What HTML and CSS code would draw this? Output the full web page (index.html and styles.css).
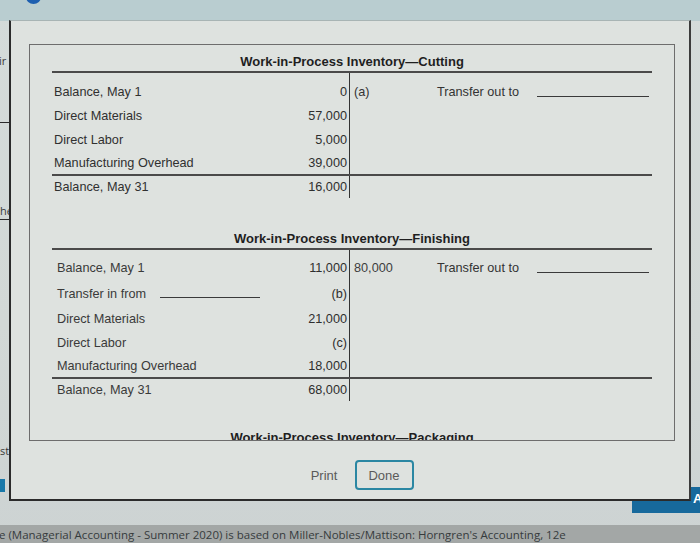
FILE: index.html
```html
<!DOCTYPE html>
<html>
<head>
<meta charset="utf-8">
<link rel="stylesheet" href="styles.css">
</head>
<body>
<div class="page">
  <div class="under">
    <div class="topstrip"><span class="dot"></span></div>
    <div class="leftcol">
      <div class="frag frag-ir">ir</div>
      <div class="frag-rule rule-1"></div>
      <div class="frag frag-he">he</div>
      <div class="frag-rule rule-2"></div>
      <div class="frag frag-st">st</div>
      <div class="frag-blue"></div>
    </div>
    <div class="bluebtn">A</div>
    <div class="footer">e (Managerial Accounting - Summer 2020) is based on Miller-Nobles/Mattison: Horngren's Accounting, 12e</div>
  </div>

  <div class="modal">
    <div class="panel">
      <div class="taccount">
        <div class="ttitle">Work-in-Process Inventory—Cutting</div>
        <div class="trow first">
          <div class="lcell"><span>Balance, May 1</span><span class="amt">0</span></div>
          <div class="rcell"><span class="ramt">(a)</span><span class="xfer">Transfer out to</span><span class="blank wide"></span></div>
        </div>
        <div class="trow">
          <div class="lcell"><span>Direct Materials</span><span class="amt">57,000</span></div>
          <div class="rcell"></div>
        </div>
        <div class="trow">
          <div class="lcell"><span>Direct Labor</span><span class="amt">5,000</span></div>
          <div class="rcell"></div>
        </div>
        <div class="trow ruled">
          <div class="lcell"><span>Manufacturing Overhead</span><span class="amt">39,000</span></div>
          <div class="rcell"></div>
        </div>
        <div class="trow last">
          <div class="lcell"><span>Balance, May 31</span><span class="amt">16,000</span></div>
          <div class="rcell"></div>
        </div>
      </div>

      <div class="taccount second">
        <div class="ttitle">Work-in-Process Inventory—Finishing</div>
        <div class="trow first">
          <div class="lcell"><span class="lbl-b">Balance, May 1</span><span class="amt">11,000</span></div>
          <div class="rcell"><span class="ramt">80,000</span><span class="xfer">Transfer out to</span><span class="blank wide"></span></div>
        </div>
        <div class="trow tall">
          <div class="lcell"><span class="lbl-b">Transfer in from</span><span class="blank short"></span><span class="amt">(b)</span></div>
          <div class="rcell"></div>
        </div>
        <div class="trow">
          <div class="lcell"><span class="lbl-b">Direct Materials</span><span class="amt">21,000</span></div>
          <div class="rcell"></div>
        </div>
        <div class="trow">
          <div class="lcell"><span class="lbl-b">Direct Labor</span><span class="amt">(c)</span></div>
          <div class="rcell"></div>
        </div>
        <div class="trow ruled">
          <div class="lcell"><span class="lbl-b">Manufacturing Overhead</span><span class="amt">18,000</span></div>
          <div class="rcell"></div>
        </div>
        <div class="trow last">
          <div class="lcell"><span class="lbl-b">Balance, May 31</span><span class="amt">68,000</span></div>
          <div class="rcell"></div>
        </div>
      </div>

      <div class="taccount third">
        <div class="ttitle">Work-in-Process Inventory—Packaging</div>
      </div>
    </div>
    <div class="actions">
      <button class="btn print">Print</button>
      <button class="btn done">Done</button>
    </div>
  </div>
</div>
</body>
</html>
```

FILE: styles.css
```css
* { box-sizing: border-box; }
html, body { margin: 0; padding: 0; }
body {
  width: 700px;
  height: 543px;
  overflow: hidden;
  background: #cfd6d5;
  font-family: "Liberation Sans", Arial, Helvetica, sans-serif;
  color: #2e2e2e;
}
.page {
  position: relative;
  width: 700px;
  height: 543px;
  overflow: hidden;
}

/* underlying page */
.under {
  display: flex;
  flex-direction: column;
  height: 543px;
  background: linear-gradient(180deg, #d4dbda 0%, #d2d8d6 60%, #cdd3d3 100%);
}
.topstrip {
  height: 21px;
  background: #b9cdd0;
  position: relative;
  flex: none;
}
.dot {
  position: absolute;
  left: 26px;
  top: -10px;
  width: 15px;
  height: 14px;
  border-radius: 50%;
  background: #1d5fb0;
}
.leftcol {
  width: 9px;
  flex: 1;
  display: flex;
  flex-direction: column;
  overflow: hidden;
  font-family: "Open Sans", "Liberation Sans", sans-serif;
  font-size: 11px;
  color: #3a3a3a;
}
.frag { line-height: 12px; white-space: nowrap; }
.frag-ir { margin-top: 34px; margin-left: -1px; }
.frag-rule { height: 1px; background: #2a2a2a; width: 9px; }
.rule-1 { margin-top: 55px; }
.frag-he { margin-top: 82px; margin-left: 0; }
.rule-2 { margin-top: 2px; }
.frag-st { margin-top: 225px; margin-left: 0; }
.frag-blue { margin-top: 22px; width: 5px; height: 13px; background: #1878a9; }

.bluebtn {
  position: absolute;
  left: 632px;
  top: 487px;
  width: 80px;
  height: 26px;
  background: #17699c;
  color: #fff;
  font-size: 13px;
  font-weight: bold;
  padding: 4px 0 0 61px;
}
.footer {
  flex: none;
  height: 18px;
  background: #a3a7a6;
  font-family: "Open Sans", "Liberation Sans", sans-serif;
  font-size: 11.5px;
  line-height: 16px;
  color: #363b3d;
  white-space: nowrap;
  padding-top: 2px;
  margin-left: -1px;
}

/* modal dialog overlaying the page */
.modal {
  position: absolute;
  left: 9px;
  top: 20px;
  width: 682px;
  height: 481px;
  background: #dee2df;
  border-left: 2px solid #2b2b2b;
  border-bottom: 2px solid #2b2b2b;
  border-right: 2px solid #3c3c3c;
  border-top: 1px solid #a8b4b4;
  display: flex;
  flex-direction: column;
}
.panel {
  margin: 23px 0 0 18px;
  width: 646px;
  height: 397px;
  border: 1px solid #6d6d6d;
  overflow: hidden;
  padding-left: 22px;
  flex: none;
}

.taccount { width: 600px; }
.ttitle {
  margin-top: 5px;
  height: 23px;
  line-height: 23px;
  text-align: center;
  font-weight: bold;
  font-size: 13px;
  color: #1f1f1f;
  border-bottom: 2px solid #4a4a4a;
}
.second .ttitle { margin-top: 29px; }
.third .ttitle { margin-top: 25px; border-bottom: none; }

.trow {
  display: grid;
  grid-template-columns: 298px 302px;
  height: 24px;
  font-size: 12.7px;
}
.trow.first { height: 31px; }
.trow.first > div { padding-top: 7px; }
.second .trow.first { height: 30px; }
.second .trow.first > div { padding-top: 6px; }
.trow.tall { height: 27px; }
.trow.ruled { border-bottom: 2px solid #4a4a4a; }
.trow.last { height: 22px; }

.lcell {
  display: flex;
  align-items: center;
  padding: 0 2px 0 2px;
  border-right: 1.5px solid #333;
  color: #303030;
}
.lbl-b { margin-left: 3px; color: #3a3a3a; }
.amt { margin-left: auto; color: #2e2e2e; }
.rcell {
  display: flex;
  align-items: center;
  padding-left: 4px;
  color: #333;
}
.ramt { width: 83px; }
.second .ramt { color: #3d3d3d; }
.xfer { width: 100px; }
.blank {
  display: block;
  height: 1px;
  background: #3a3a3a;
}
.blank.wide { width: 112px; margin-top: 9px; }
.blank.short { width: 100px; margin-left: 14px; margin-top: 8px; }

.actions {
  display: flex;
  justify-content: center;
  gap: 5px;
  margin-top: 19px;
  padding-left: 12px;
}
.btn {
  font-family: "Liberation Sans", Arial, sans-serif;
  font-size: 13px;
  color: #5a5a5a;
  background: transparent;
  height: 30px;
  border-radius: 4px;
  cursor: pointer;
}
.print {
  border: none;
  padding: 0 12px;
  width: 51px;
}
.done {
  width: 59px;
  border: 2px solid #2b87a3;
  padding: 0;
}
```
